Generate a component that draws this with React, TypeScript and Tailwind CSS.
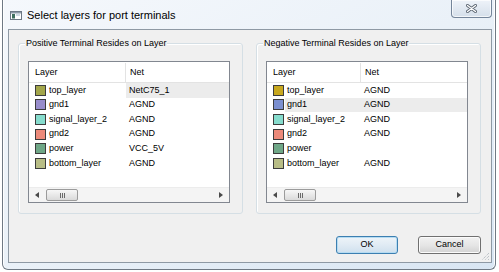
type Row = { layer: string; net: string; color: string };

const positive: Row[] = [
  { layer: "top_layer", net: "NetC75_1", color: "#a3a64a" },
  { layer: "gnd1", net: "AGND", color: "#988dcc" },
  { layer: "signal_layer_2", net: "AGND", color: "#86dccd" },
  { layer: "gnd2", net: "AGND", color: "#ec8a7a" },
  { layer: "power", net: "VCC_5V", color: "#6fa787" },
  { layer: "bottom_layer", net: "AGND", color: "#b8bd86" },
];

const negative: Row[] = [
  { layer: "top_layer", net: "AGND", color: "#c8a81e" },
  { layer: "gnd1", net: "AGND", color: "#7b8fd0" },
  { layer: "signal_layer_2", net: "AGND", color: "#86dccd" },
  { layer: "gnd2", net: "AGND", color: "#ec8a7a" },
  { layer: "power", net: "", color: "#6fa787" },
  { layer: "bottom_layer", net: "AGND", color: "#b8bd86" },
];

function Arrow({ dir }: { dir: "l" | "r" }) {
  return (
    <svg width="4" height="6" viewBox="0 0 4 6">
      <path d={dir === "l" ? "M4 0 L0 3 L4 6 Z" : "M0 0 L4 3 L0 6 Z"} fill="#4a4a4a" />
    </svg>
  );
}

function LayerList({
  rows,
  colWidth,
  selected,
  fullHighlight,
}: {
  rows: Row[];
  colWidth: string;
  selected: number;
  fullHighlight: boolean;
}) {
  return (
    <div className="flex h-[142px] w-[202px] flex-col border border-[#828790] bg-white">
      {/* header */}
      <div className="flex h-[21px] border-b border-[#e3e3e3] pt-[1px]">
        <div className={`${colWidth} flex items-center border-r border-[#e3e3e3] pl-[6px]`}>Layer</div>
        <div className="flex items-center pl-[4px]">Net</div>
      </div>

      <div className="flex-1">
        {rows.map((r, i) => (
          <div key={r.layer} className="flex h-[14.6px] items-center">
            <div className={`${colWidth} flex h-full items-center pl-[6px]`}>
              <span
                className="h-[11px] w-[11px] shrink-0 border border-[#3c3c3c]"
                style={{ backgroundColor: r.color }}
              />
              <span
                className={`ml-[1px] flex h-full flex-1 items-center pl-[2px] ${
                  i === selected && !fullHighlight ? "bg-[#ececec]" : ""
                }`}
              >
                {r.layer}
              </span>
            </div>
            <div
              className={`flex h-full flex-1 items-center pl-[3px] ${
                i === selected ? "bg-[#ececec]" : ""
              }`}
            >
              {r.net}
            </div>
          </div>
        ))}
      </div>

      {/* horizontal scrollbar */}
      <div className="flex h-[15px] border-t border-[#ececec] bg-[#f4f4f4]">
        <div className="flex w-[16px] items-center justify-center">
          <Arrow dir="l" />
        </div>
        <div className="my-[1px] ml-[1px] flex w-[32px] items-center justify-center gap-[1px] rounded-[2px] border border-[#9b9b9b] bg-gradient-to-b from-[#f7f7f7] to-[#dadada]">
          <span className="h-[5px] w-[1px] bg-[#6a6a6a]" />
          <span className="h-[5px] w-[1px] bg-[#6a6a6a]" />
          <span className="h-[5px] w-[1px] bg-[#6a6a6a]" />
        </div>
        <div className="flex-1" />
        <div className="flex w-[16px] items-center justify-center">
          <Arrow dir="r" />
        </div>
      </div>
    </div>
  );
}

function GroupBox({ title, children }: { title: string; children: React.ReactNode }) {
  return (
    <div className="relative h-[171px] w-[225px] rounded-[3px] border border-[#d5dfe5] pl-[9px] pt-[17px] shadow-[inset_1px_1px_0_#fff]">
      <span className="absolute left-[6px] top-[-6px] bg-[#f0f0f0] px-[1px] leading-[11px]">{title}</span>
      {children}
    </div>
  );
}

export default function App() {
  return (
    <div className="h-[272px] w-[499px] overflow-hidden bg-white text-[9px] text-black [font-family:'Liberation_Sans',Arial,sans-serif]">
      <div className="relative ml-[2px] flex h-[270px] w-[494px] flex-col rounded-b-[6px] border border-t-0 border-[#6f7984] bg-gradient-to-br from-[#f5f8fc] via-[#eaf1f8] to-[#d9e6f3] pb-[6px] pl-[5px] pr-[3px] shadow-[inset_1px_0_0_rgba(255,255,255,0.9),inset_-1px_0_0_rgba(255,255,255,0.9)]">
        {/* title bar */}
        <div className="flex h-[29px]">
          <div className="flex flex-1 items-center pl-[2px] pt-[2px]">
            <svg width="12" height="9" viewBox="0 0 12 9">
              <rect x="0.5" y="0.5" width="11" height="8" fill="#fff" stroke="#6d7884" />
              <rect x="1" y="1" width="10" height="1.5" fill="#8c9aa8" />
              <rect x="2" y="3" width="3" height="4.5" fill="#3f6f5e" />
              <rect x="6" y="3" width="4" height="2" fill="#cfd9e3" />
            </svg>
            <span className="ml-[5px] text-[11px]">Select layers for port terminals</span>
          </div>
          <div className="flex h-[18px] w-[41px] items-center justify-center rounded-b-[4px] border border-t-0 border-[#74859a] bg-gradient-to-b from-[#eef3f9] to-[#d5dfea] shadow-[inset_0_0_0_1px_rgba(255,255,255,0.7)]">
            <svg width="11" height="9" viewBox="0 0 11 9">
              <path d="M1.5 1.5 L9.5 7.5 M9.5 1.5 L1.5 7.5" stroke="#5a6470" strokeWidth="3" strokeLinecap="round" />
              <path d="M1.5 1.5 L9.5 7.5 M9.5 1.5 L1.5 7.5" stroke="#fff" strokeWidth="1.3" strokeLinecap="round" />
            </svg>
          </div>
        </div>

        {/* client area */}
        <div className="relative flex flex-1 flex-col border border-[#8e99a4] bg-[#f0f0f0] pl-[9px] pr-[10px] pt-[13px]">
          <div className="flex gap-[13px]">
            <GroupBox title="Positive Terminal Resides on Layer">
              <LayerList rows={positive} colWidth="w-[97px]" selected={0} fullHighlight />
            </GroupBox>
            <GroupBox title="Negative Terminal Resides on Layer">
              <LayerList rows={negative} colWidth="w-[94px]" selected={1} fullHighlight={false} />
            </GroupBox>
          </div>

          <div className="mt-[22px] flex justify-end gap-[20px]">
            <button className="h-[18px] w-[62px] rounded-[3px] border border-[#3c7fb1] bg-gradient-to-b from-[#eef4f9] via-[#e0ebf4] to-[#cfe0ee] shadow-[inset_0_0_0_1px_#b6dcf2]">
              OK
            </button>
            <button className="h-[18px] w-[63px] rounded-[3px] border border-[#707070] bg-gradient-to-b from-[#f2f2f2] via-[#e6e6e6] to-[#d3d3d3] shadow-[inset_0_0_0_1px_#fbfbfb]">
              Cancel
            </button>
          </div>

          {/* size grip */}
          <svg className="absolute bottom-[1px] right-[1px]" width="9" height="9" viewBox="0 0 9 9">
            <path d="M8 1 L1 8 M8 4 L4 8 M8 7 L7 8" stroke="#a8b0b8" strokeWidth="1" strokeDasharray="1 1" />
          </svg>
        </div>
      </div>
    </div>
  );
}
